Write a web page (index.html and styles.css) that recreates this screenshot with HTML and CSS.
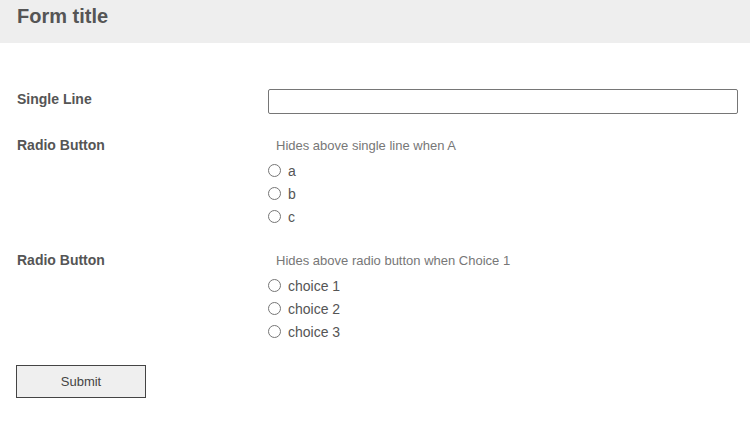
FILE: index.html
```html
<!DOCTYPE html>
<html>
<head>
<meta charset="utf-8">
<link rel="stylesheet" href="styles.css">
</head>
<body>
<header class="form-header"><h1 class="form-title">Form title</h1></header>
<form class="form-body">
  <div class="row">
    <label class="field-label">Single Line</label>
    <div class="field"><input class="text-input" type="text"></div>
  </div>
  <div class="row">
    <label class="field-label">Radio Button</label>
    <div class="field group">
      <div class="help">Hides above single line when A</div>
      <label class="option"><span class="radio"></span>a</label>
      <label class="option"><span class="radio"></span>b</label>
      <label class="option"><span class="radio"></span>c</label>
    </div>
  </div>
  <div class="row">
    <label class="field-label">Radio Button</label>
    <div class="field group">
      <div class="help">Hides above radio button when Choice 1</div>
      <label class="option"><span class="radio"></span>choice 1</label>
      <label class="option"><span class="radio"></span>choice 2</label>
      <label class="option"><span class="radio"></span>choice 3</label>
    </div>
  </div>
  <div class="actions"><button class="submit" type="button">Submit</button></div>
</form>
</body>
</html>
```
FILE: styles.css
```css
html, body { margin: 0; padding: 0; background: #fff; }
body { font-family: "Liberation Sans", Arial, sans-serif; color: #555; }
.form-header { background: #eeeeee; height: 43px; padding: 0 17px; box-sizing: border-box; }
.form-title { margin: 0; font-size: 20px; font-weight: bold; line-height: 33px; color: #555; }
.form-body { display: flex; flex-direction: column; gap: 23px; padding: 46px 12px 0 17px; }
.row { display: grid; grid-template-columns: 251px 1fr; align-items: start; }
.field-label { font-size: 14px; font-weight: bold; line-height: 16px; padding-top: 2px; color: #555; }
.row + .row .field-label { padding-top: 0; }
.text-input { display: block; width: 100%; box-sizing: border-box; height: 25px; margin: 0; border: 1px solid #767676; border-radius: 2px; padding: 0 4px; font: inherit; }
.group { padding-bottom: 1px; }
.help { font-size: 13px; line-height: 16px; color: #777; padding: 1px 8px 0; margin-bottom: 5px; }
.option { display: flex; align-items: center; height: 23px; font-size: 14px; color: #555; gap: 7px; }
.radio { width: 11px; height: 11px; border: 1px solid #767676; border-radius: 50%; flex: none; }
.actions { margin-top: -2px; }
.submit { width: 130px; height: 33px; margin: 0 0 0 -1px; background: #efefef; border: 1px solid #444; border-radius: 0; font-family: "Liberation Sans", Arial, sans-serif; font-size: 13px; color: #444; }
```
